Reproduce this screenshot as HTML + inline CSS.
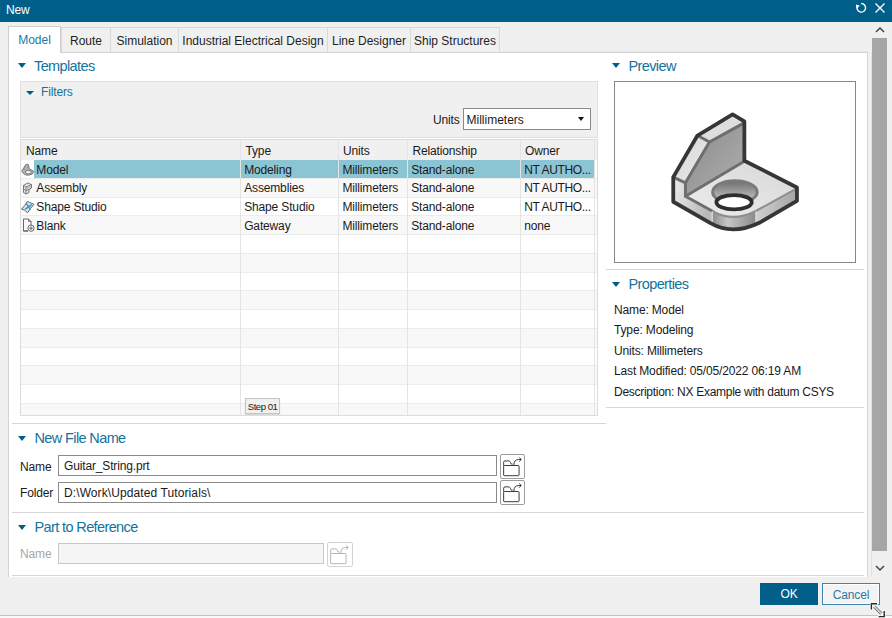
<!DOCTYPE html>
<html><head><meta charset="utf-8">
<style>
*{margin:0;padding:0;box-sizing:border-box}
html,body{width:892px;height:618px;overflow:hidden;background:#f0f0f0;font-family:"Liberation Sans",sans-serif;font-size:12px;color:#1a1a1a;letter-spacing:-0.15px}
.a{position:absolute;white-space:nowrap}
.title{left:0;top:0;width:892px;height:22px;background:#005f89}
.tab{top:27px;height:25px;background:#f0f0f0;border:1px solid #d9d9d9;border-bottom:none;line-height:26px;text-align:center;color:#1e1e1e;letter-spacing:0}
.tab.act{top:26px;height:27px;background:#fff;color:#1a7aa6;border-color:#cfcfcf;z-index:3;line-height:27px}
.panel{left:8px;top:52px;width:860px;height:525px;background:#fff;border:1px solid #d4d4d4;border-bottom:none}
.sec{color:#13739c;font-size:14.5px;letter-spacing:-0.62px}
.tri{width:0;height:0;border-left:4.8px solid transparent;border-right:4.8px solid transparent;border-top:5.2px solid #005e88}
.hl{background:#d5d5d5}
.lbl{color:#222}
.inp{background:#fff;border:1px solid #8a8a8a}
.row{left:20px;width:578px;height:19px}
.cell{line-height:18px}
.sep{height:1px;background:#d6d6d6}
</style></head><body>
<!-- title bar -->
<div class="a title"></div>
<div class="a" style="left:6px;top:3px;color:#fff;font-size:12px;line-height:14px">New</div>
<svg class="a" style="left:855px;top:2px" width="13" height="13" viewBox="0 0 13 13"><path d="M6.2,1.5 A4.3,4.3 0 1 1 2.5,3.7" fill="none" stroke="#fff" stroke-width="1.4"/><path d="M0.9,2.6 L4.7,3.4 L1.7,6.9 Z" fill="#fff"/></svg>
<svg class="a" style="left:874px;top:2px" width="12" height="12" viewBox="0 0 12 12"><path d="M1.5 1.5 L10.5 10.5 M10.5 1.5 L1.5 10.5" stroke="#fff" stroke-width="1.4"/></svg>

<!-- tabs -->
<div class="a tab" style="left:61px;width:50px">Route</div>
<div class="a tab" style="left:110px;width:69px">Simulation</div>
<div class="a tab" style="left:178px;width:150px">Industrial Electrical Design</div>
<div class="a tab" style="left:327px;width:84px">Line Designer</div>
<div class="a tab" style="left:410px;width:90px">Ship Structures</div>

<!-- white panel -->
<div class="a panel"></div>
<div class="a" style="left:499px;top:51px;width:369px;height:1px;background:#e6e6e6"></div>
<div class="a tab act" style="left:8px;width:53px">Model</div>

<!-- scrollbar -->
<div class="a" style="left:871px;top:22px;width:21px;height:555px;background:#f0f0f0"></div>
<svg class="a" style="left:875px;top:26px" width="10" height="8" viewBox="0 0 10 8"><path d="M1 6 L5 2 L9 6" fill="none" stroke="#444" stroke-width="1.5"/></svg>
<div class="a" style="left:871px;top:52px;width:1px;height:525px;background:#e2e2e2"></div>
<div class="a" style="left:872px;top:38px;width:15px;height:513px;background:#a6a6a6"></div>
<svg class="a" style="left:875px;top:564px" width="10" height="8" viewBox="0 0 10 8"><path d="M1 2 L5 6 L9 2" fill="none" stroke="#444" stroke-width="1.5"/></svg>

<!-- Templates section -->
<div class="a tri" style="left:17.6px;top:63.4px"></div>
<div class="a sec" style="left:34px;top:58px;line-height:17px">Templates</div>

<!-- Filters panel -->
<div class="a" style="left:20px;top:81px;width:578px;height:57px;background:#f0f0f0;border:1px solid #e0e0e0"></div>
<div class="a tri" style="left:26.2px;top:90.5px;border-left-width:4.1px;border-right-width:4.1px;border-top-width:4.3px"></div>
<div class="a" style="left:41px;top:85px;color:#13739c;line-height:14px">Filters</div>
<div class="a" style="left:433px;top:113px;line-height:14px">Units</div>
<div class="a inp" style="left:463px;top:108px;width:128px;height:22px"></div>
<div class="a" style="left:466.5px;top:113px;line-height:14px;letter-spacing:0">Millimeters</div>
<div class="a tri" style="left:577.8px;top:116.6px;border-top-color:#111;border-left-width:3.6px;border-right-width:3.6px;border-top-width:4.4px"></div>

<!-- Table -->
<div class="a" id="table" style="left:20px;top:139px;width:578px;height:277px;border:1px solid #dcdcdc;background:#fff;overflow:hidden">
<!--TBL-->
<div class="a" style="left:0;top:0;width:577px;height:20px;background:#f0f0f0"></div>
<div class="a" style="left:5.0px;top:1.8px;line-height:18px">Name</div>
<div class="a" style="left:224.5px;top:1.8px;line-height:18px">Type</div>
<div class="a" style="left:322.0px;top:1.8px;line-height:18px">Units</div>
<div class="a" style="left:391.5px;top:1.8px;line-height:18px">Relationship</div>
<div class="a" style="left:504.0px;top:1.8px;line-height:18px">Owner</div>
<div class="a" style="left:0;top:20px;width:577px;height:18px;background:#ffffff"></div>
<div class="a" style="left:0;top:38px;width:577px;height:19px;background:#f8f8f8"></div>
<div class="a" style="left:0;top:57px;width:577px;height:19px;background:#ffffff"></div>
<div class="a" style="left:0;top:76px;width:577px;height:18px;background:#f8f8f8"></div>
<div class="a" style="left:0;top:94px;width:577px;height:19px;background:#ffffff"></div>
<div class="a" style="left:0;top:113px;width:577px;height:19px;background:#f8f8f8"></div>
<div class="a" style="left:0;top:132px;width:577px;height:19px;background:#ffffff"></div>
<div class="a" style="left:0;top:151px;width:577px;height:19px;background:#f8f8f8"></div>
<div class="a" style="left:0;top:170px;width:577px;height:18px;background:#ffffff"></div>
<div class="a" style="left:0;top:188px;width:577px;height:19px;background:#f8f8f8"></div>
<div class="a" style="left:0;top:207px;width:577px;height:19px;background:#ffffff"></div>
<div class="a" style="left:0;top:226px;width:577px;height:18px;background:#f8f8f8"></div>
<div class="a" style="left:0;top:244px;width:577px;height:19px;background:#ffffff"></div>
<div class="a" style="left:0;top:263px;width:577px;height:19px;background:#f8f8f8"></div>
<div class="a" style="left:0;top:38px;width:577px;height:1px;background:#ececec"></div>
<div class="a" style="left:0;top:57px;width:577px;height:1px;background:#ececec"></div>
<div class="a" style="left:0;top:75px;width:577px;height:1px;background:#ececec"></div>
<div class="a" style="left:0;top:94px;width:577px;height:1px;background:#ececec"></div>
<div class="a" style="left:0;top:113px;width:577px;height:1px;background:#ececec"></div>
<div class="a" style="left:0;top:132px;width:577px;height:1px;background:#ececec"></div>
<div class="a" style="left:0;top:150px;width:577px;height:1px;background:#ececec"></div>
<div class="a" style="left:0;top:169px;width:577px;height:1px;background:#ececec"></div>
<div class="a" style="left:0;top:188px;width:577px;height:1px;background:#ececec"></div>
<div class="a" style="left:0;top:207px;width:577px;height:1px;background:#ececec"></div>
<div class="a" style="left:0;top:225px;width:577px;height:1px;background:#ececec"></div>
<div class="a" style="left:0;top:244px;width:577px;height:1px;background:#ececec"></div>
<div class="a" style="left:0;top:263px;width:577px;height:1px;background:#ececec"></div>
<div class="a" style="left:0;top:282px;width:577px;height:1px;background:#ececec"></div>
<div class="a" style="left:13px;top:20px;width:560px;height:18px;background:#8bc4d3"></div>
<div class="a" style="left:219.1px;top:0;width:1px;height:277px;background:#e4e4e4"></div>
<div class="a" style="left:317.3px;top:0;width:1px;height:277px;background:#e4e4e4"></div>
<div class="a" style="left:385.9px;top:0;width:1px;height:277px;background:#e4e4e4"></div>
<div class="a" style="left:499.0px;top:0;width:1px;height:277px;background:#e4e4e4"></div>
<div class="a" style="left:572.5px;top:0;width:1px;height:277px;background:#e4e4e4"></div>
<div class="a cell" style="left:15.3px;top:20.70px;line-height:18.75px">Model</div>
<div class="a cell" style="left:223.2px;top:20.70px;line-height:18.75px">Modeling</div>
<div class="a cell" style="left:321.4px;top:20.70px;line-height:18.75px">Millimeters</div>
<div class="a cell" style="left:390.2px;top:20.70px;line-height:18.75px">Stand-alone</div>
<div class="a cell" style="left:503.2px;top:20.70px;line-height:18.75px;letter-spacing:-0.35px">NT AUTHO...</div>
<div class="a cell" style="left:15.3px;top:39.45px;line-height:18.75px">Assembly</div>
<div class="a cell" style="left:223.2px;top:39.45px;line-height:18.75px">Assemblies</div>
<div class="a cell" style="left:321.4px;top:39.45px;line-height:18.75px">Millimeters</div>
<div class="a cell" style="left:390.2px;top:39.45px;line-height:18.75px">Stand-alone</div>
<div class="a cell" style="left:503.2px;top:39.45px;line-height:18.75px;letter-spacing:-0.35px">NT AUTHO...</div>
<div class="a cell" style="left:15.3px;top:58.20px;line-height:18.75px">Shape Studio</div>
<div class="a cell" style="left:223.2px;top:58.20px;line-height:18.75px">Shape Studio</div>
<div class="a cell" style="left:321.4px;top:58.20px;line-height:18.75px">Millimeters</div>
<div class="a cell" style="left:390.2px;top:58.20px;line-height:18.75px">Stand-alone</div>
<div class="a cell" style="left:503.2px;top:58.20px;line-height:18.75px;letter-spacing:-0.35px">NT AUTHO...</div>
<div class="a cell" style="left:15.3px;top:76.95px;line-height:18.75px">Blank</div>
<div class="a cell" style="left:223.2px;top:76.95px;line-height:18.75px">Gateway</div>
<div class="a cell" style="left:321.4px;top:76.95px;line-height:18.75px">Millimeters</div>
<div class="a cell" style="left:390.2px;top:76.95px;line-height:18.75px">Stand-alone</div>
<div class="a cell" style="left:503.2px;top:76.95px;line-height:18.75px">none</div>

<svg class="a" style="left:0px;top:22px" width="14" height="14" viewBox="0 0 14 14">
<path d="M0.8,9 L4.8,2.6 Q6.2,1.8 7.4,2.6 L8.2,6.6 L12.8,9.4 Q12,13 7.5,13.2 Q2.5,13.4 0.8,9 Z" fill="#b9b9b9" stroke="#6a6a6a" stroke-width="0.9"/>
<path d="M4.8,2.6 L3.2,8.6 M7.4,2.6 L5.8,7.6" stroke="#8a8a8a" stroke-width="0.7" fill="none"/>
<ellipse cx="7.3" cy="10" rx="3.1" ry="1.6" fill="#e8e8e8" stroke="#6a6a6a" stroke-width="0.8"/>
<ellipse cx="7.3" cy="10.5" rx="1.8" ry="0.8" fill="#fff"/>
</svg>
<svg class="a" style="left:1px;top:41px" width="11" height="14" viewBox="0 0 11 14">
<path d="M1.5,4.5 L5.5,2 L9.5,3.5 L9.5,7 L7,8.5 L7,11.5 L4,13 L1.5,11.5 Z" fill="#e6e6e6" stroke="#6a6a6a" stroke-width="0.9" stroke-linejoin="round"/>
<path d="M1.5,4.5 L4,6 L9.5,3.5 M4,6 L4,13 M1.5,8 L4,9.5 L7,8.5" fill="none" stroke="#6a6a6a" stroke-width="0.8"/>
<path d="M4.6,6.6 L8.8,4.4 L8.8,6.6 L4.6,8.8 Z" fill="#bdbdbd"/>
</svg>
<svg class="a" style="left:0px;top:60px" width="14" height="14" viewBox="0 0 14 14">
<path d="M0.6,9.2 Q3.5,6 6.4,1.4 L13,4.4 Q9.5,8 6.6,12.8 Q4,9.6 0.6,9.2 Z" fill="#e4e0e0" stroke="#5e5e5e" stroke-width="0.95" stroke-linejoin="round"/>
<path d="M5.2,3.4 L9.6,9.6 M10.8,4.6 L4.2,9.2" stroke="#1fa0d8" stroke-width="1.5"/>
</svg>
<svg class="a" style="left:1px;top:78px" width="13" height="14" viewBox="0 0 13 14">
<path d="M1.5,1 L6.5,1 L9,3.5 L9,7.5 M6,13 L1.5,13 Z M1.5,1 L1.5,13" fill="#fff" stroke="#555" stroke-width="0.9" stroke-linejoin="round"/>
<path d="M6.5,1 L6.5,3.5 L9,3.5" fill="none" stroke="#555" stroke-width="0.8"/>
<circle cx="9" cy="10.2" r="3.1" fill="#fff" stroke="#555" stroke-width="0.9"/>
<path d="M9,8.4 L9,12 M7.2,10.2 L10.8,10.2" stroke="#555" stroke-width="0.9"/>
</svg>
<div class="a" style="left:224.3px;top:258.2px;width:34.5px;height:15.5px;background:#f0f0f0;border:1px solid #c4c4c4;box-shadow:0 1px 1px rgba(0,0,0,0.12);font-size:9.6px;letter-spacing:-0.5px;line-height:15px;text-align:center;color:#1a1a1a">Step 01</div>

<!--/TBL-->
</div>

<!-- right column: Preview -->
<div class="a tri" style="left:612px;top:63.4px"></div>
<div class="a sec" style="left:628.5px;top:58px;line-height:17px">Preview</div>
<div class="a" style="left:614px;top:81px;width:242px;height:182px;border:1px solid #888;background:#fff"></div>
<svg class="a" id="brk" style="left:660px;top:105px" width="150" height="130" viewBox="0 0 713 618">
<defs>
<linearGradient id="gl" x1="0" y1="0" x2="1" y2="0.3"><stop offset="0" stop-color="#ececec"/><stop offset="1" stop-color="#b8b8b8"/></linearGradient>
<linearGradient id="gp" x1="0" y1="0" x2="1" y2="1"><stop offset="0" stop-color="#8a8a8a"/><stop offset="1" stop-color="#b0b0b0"/></linearGradient>
<linearGradient id="gt" x1="0" y1="1" x2="1" y2="0"><stop offset="0" stop-color="#ececec"/><stop offset="0.5" stop-color="#e2e2e2"/><stop offset="1" stop-color="#d6d6d6"/></linearGradient>
<linearGradient id="gm" x1="0" y1="0" x2="1" y2="0"><stop offset="0" stop-color="#8c8c8c"/><stop offset="0.35" stop-color="#c6c6c6"/><stop offset="1" stop-color="#8a8a8a"/></linearGradient>
<linearGradient id="gr" x1="0" y1="0" x2="1" y2="0"><stop offset="0" stop-color="#d0d0d0"/><stop offset="1" stop-color="#a4a4a4"/></linearGradient>
<linearGradient id="gh" x1="0" y1="0" x2="0" y2="1"><stop offset="0" stop-color="#6e6e6e"/><stop offset="0.6" stop-color="#a8a8a8"/><stop offset="1" stop-color="#d8d8d8"/></linearGradient>
<linearGradient id="gc" x1="0" y1="0" x2="1" y2="1"><stop offset="0" stop-color="#d4d4d4"/><stop offset="1" stop-color="#ececec"/></linearGradient>
</defs>
<!-- left side + left front segment -->
<path d="M63,343 L121,370 L121,434 L248,504 L248,564 L63,460 Z" fill="url(#gl)"/>
<!-- middle curved segment -->
<path d="M248,504 Q345,560 456,504 L456,564 Q345,622 248,564 Z" fill="url(#gm)"/>
<!-- right segment -->
<path d="M456,504 L651,396 L651,456 L456,564 Z" fill="url(#gr)"/>
<!-- left chamfer band -->
<path d="M63,343 L178,145 L235,176 L121,370 Z" fill="url(#gc)"/>
<!-- top chamfer band -->
<path d="M178,145 L345,45 L401,78 L401,86 L235,176 Z" fill="#dedede"/>
<!-- plate face -->
<path d="M235,176 L401,84 L401,267 L121,434 L121,370 Z" fill="url(#gp)"/>
<!-- base top face -->
<path d="M121,434 L401,267 L651,396 L456,504 Q345,560 248,504 Z" fill="url(#gt)"/>
<!-- hole -->
<ellipse cx="356" cy="414" rx="106" ry="54" fill="url(#gh)" stroke="#7a7a7a" stroke-width="14"/>
<ellipse cx="352" cy="462" rx="84" ry="34" fill="#fff" stroke="#2e2e2e" stroke-width="18"/>
<!-- inner edges -->
<g fill="none" stroke="#6e6e6e" stroke-width="14" stroke-linejoin="round" stroke-linecap="round">
<path d="M63,343 L121,370 L235,176 L178,145"/>
<path d="M235,176 L398,86"/>
<path d="M121,370 L121,434 L248,504"/>
<path d="M121,434 L401,267"/>
</g>
<g fill="none" stroke="#8e8e8e" stroke-width="10">
<path d="M248,504 Q345,560 456,504 L651,396"/>
</g>
<g fill="none" stroke="#d8d8d8" stroke-width="7">
<path d="M248,506 L248,566 M456,506 L456,564"/>
</g>
<!-- outline -->
<path d="M63,343 L178,145 L345,45 L401,78 L401,265 L651,392 L651,456 L472,560 Q345,622 240,562 L63,460 Z" fill="none" stroke="#363636" stroke-width="18" stroke-linejoin="round"/>
</svg>
<div class="a sep" style="left:606px;top:269px;width:258px"></div>

<!-- Properties -->
<div class="a tri" style="left:612px;top:281.6px"></div>
<div class="a sec" style="left:628.5px;top:276px;line-height:17px">Properties</div>
<div class="a" style="left:614px;top:303px;line-height:14px">Name: Model</div>
<div class="a" style="left:614px;top:323px;line-height:14px">Type: Modeling</div>
<div class="a" style="left:614px;top:344px;line-height:14px">Units: Millimeters</div>
<div class="a" style="left:614px;top:364px;line-height:14px">Last Modified: 05/05/2022 06:19 AM</div>
<div class="a" style="left:614px;top:385px;line-height:14px;letter-spacing:-0.28px">Description: NX Example with datum CSYS</div>
<div class="a sep" style="left:606px;top:407px;width:258px"></div>

<!-- left separators -->
<div class="a sep" style="left:12px;top:423px;width:594px"></div>

<!-- New File Name -->
<div class="a tri" style="left:18px;top:436px"></div>
<div class="a sec" style="left:34.5px;top:430px;line-height:17px">New File Name</div>
<div class="a" style="left:20px;top:460px;line-height:14px">Name</div>
<div class="a inp" style="left:58px;top:455px;width:439px;height:21px"></div>
<div class="a" style="left:64px;top:459px;line-height:14px">Guitar_String.prt</div>
<div class="a" style="left:20px;top:486px;line-height:14px">Folder</div>
<div class="a inp" style="left:58px;top:482px;width:439px;height:21px"></div>
<div class="a" style="left:64px;top:486px;line-height:14px;letter-spacing:0.1px">D:\Work\Updated Tutorials\</div>
<div class="a" style="left:499.5px;top:453.5px;width:25.5px;height:25px;border:1px solid #9c9c9c;border-radius:2px;background:#fff"></div>
<svg class="a" style="left:499.5px;top:453.5px" width="25.5" height="25" viewBox="0 0 25 25"><g fill="none" stroke="#3c3c3c" stroke-width="1" stroke-linejoin="round">
<rect x="3.4" y="11.5" width="15.4" height="10.2" rx="0.6"/>
<path d="M3.4,11.5 V8.2 Q3.4,6.9 4.7,6.9 H8.6 Q9.5,6.9 10.2,8.4 L11,10.1 H12.4"/>
<path d="M13.6,11.3 Q13.6,5.5 18.4,5.5 H20.8"/>
<path d="M18.9,3.4 L21,5.5 L18.9,7.6"/></g></svg>
<div class="a" style="left:499.5px;top:480.2px;width:25.5px;height:25px;border:1px solid #9c9c9c;border-radius:2px;background:#fff"></div>
<svg class="a" style="left:499.5px;top:480.2px" width="25.5" height="25" viewBox="0 0 25 25"><g fill="none" stroke="#3c3c3c" stroke-width="1" stroke-linejoin="round">
<rect x="3.4" y="11.5" width="15.4" height="10.2" rx="0.6"/>
<path d="M3.4,11.5 V8.2 Q3.4,6.9 4.7,6.9 H8.6 Q9.5,6.9 10.2,8.4 L11,10.1 H12.4"/>
<path d="M13.6,11.3 Q13.6,5.5 18.4,5.5 H20.8"/>
<path d="M18.9,3.4 L21,5.5 L18.9,7.6"/></g></svg>
<div class="a sep" style="left:12px;top:512px;width:852px"></div>

<!-- Part to Reference -->
<div class="a tri" style="left:18px;top:524.8px"></div>
<div class="a sec" style="left:34.5px;top:519px;line-height:17px">Part to Reference</div>
<div class="a" style="left:20px;top:547px;line-height:14px;color:#a8a8a8">Name</div>
<div class="a" style="left:58px;top:543px;width:266px;height:21px;border:1px solid #c8c8c8;background:#f5f5f5"></div>
<div class="a" style="left:327px;top:541.8px;width:25.5px;height:25px;border:1px solid #d4d4d4;border-radius:2px;background:#fff"></div>
<svg class="a" style="left:327px;top:541.8px" width="25.5" height="25" viewBox="0 0 25 25"><g fill="none" stroke="#b4b4b4" stroke-width="1" stroke-linejoin="round">
<rect x="3.4" y="11.5" width="15.4" height="10.2" rx="0.6"/>
<path d="M3.4,11.5 V8.2 Q3.4,6.9 4.7,6.9 H8.6 Q9.5,6.9 10.2,8.4 L11,10.1 H12.4"/>
<path d="M13.6,11.3 Q13.6,5.5 18.4,5.5 H20.8"/>
<path d="M18.9,3.4 L21,5.5 L18.9,7.6"/></g></svg>
<div class="a sep" style="left:12px;top:575px;width:852px"></div>

<!-- bottom -->
<div class="a" style="left:760px;top:583px;width:58px;height:22px;background:#005e88;color:#fff;text-align:center;line-height:23px">OK</div>
<div class="a" style="left:822px;top:583px;width:58px;height:22px;background:#f3f3f3;border:1px solid #3a84ad;color:#2a7ba6;text-align:center;line-height:22px;box-shadow:inset 0 0 0 1px #fff">Cancel</div>
<div class="a" style="left:0;top:615px;width:892px;height:1px;background:#c4c4c4"></div>
<div class="a" style="left:0;top:616px;width:892px;height:2px;background:#f9f9f9"></div>
<svg class="a" style="left:866px;top:600px;z-index:10" width="24" height="20" viewBox="0 0 24 20">
<path d="M5,3.8 L11,3.8 L9.1,5.7 L16.3,12.9 L18.2,11 L18.2,16.6 L12.6,16.6 L14.5,14.7 L7.3,7.5 L5.4,9.4 Z" fill="#fff" stroke="#fff" stroke-width="2.2" stroke-linejoin="round"/>
<path d="M9.1,5.7 L16.3,12.9 M7.3,7.5 L14.5,14.7" stroke="#555" stroke-width="1"/>
<path d="M8,6.6 L15.4,13.8" stroke="#c0c0c0" stroke-width="1.2"/>
<path d="M5.4,9.4 L5.4,3.8 L11,3.8" fill="none" stroke="#2a2a2a" stroke-width="1.4"/>
<path d="M18.2,11 L18.2,16.6 L12.6,16.6" fill="none" stroke="#2a2a2a" stroke-width="1.4"/>
</svg>
</body></html>
